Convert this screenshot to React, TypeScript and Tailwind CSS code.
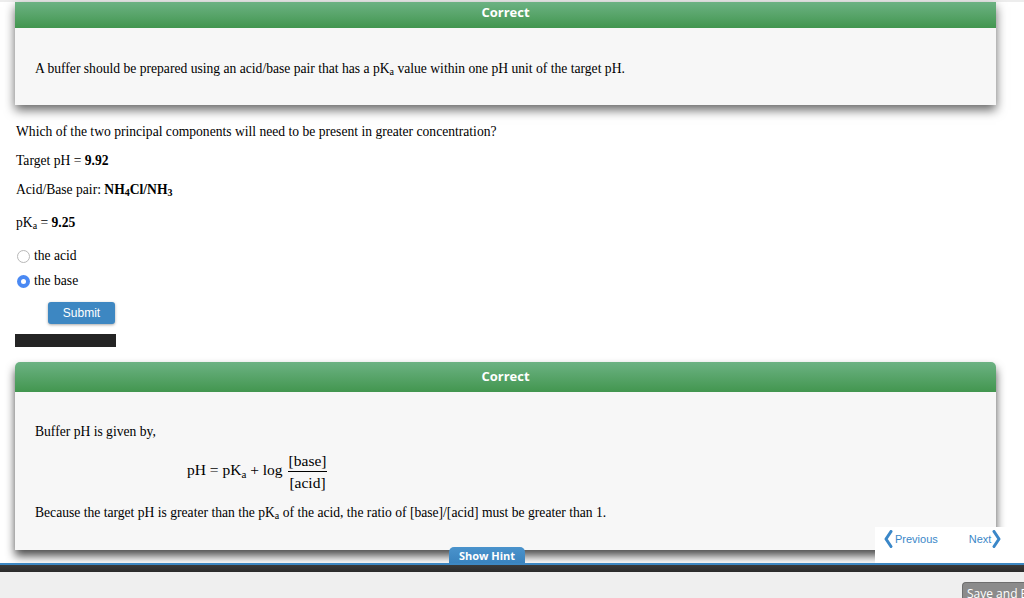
import React from "react";

function Chevron({ dir }: { dir: "left" | "right" }) {
  return (
    <svg width="9" height="18" viewBox="0 0 9 18" className="shrink-0">
      {dir === "left" ? (
        <polyline points="7,1.5 2,9 7,16.5" fill="none" stroke="#3a87c8" strokeWidth="3" strokeLinejoin="round" strokeLinecap="round" />
      ) : (
        <polyline points="2,1.5 7,9 2,16.5" fill="none" stroke="#3a87c8" strokeWidth="3" strokeLinejoin="round" strokeLinecap="round" />
      )}
    </svg>
  );
}

function Sub({ children }: { children: React.ReactNode }) {
  return <sub className="text-[10px] relative top-[2px]">{children}</sub>;
}

export default function App() {
  return (
    <div className="relative w-[1024px] h-[598px] overflow-hidden bg-white flex flex-col font-['Liberation_Serif',serif] text-black">
      <div className="h-[2px] bg-[#ededed] shrink-0" />

      {/* Card 1 */}
      <div className="ml-[15px] w-[981px] bg-[#f7f7f7] shadow-[0_5px_10px_rgba(0,0,0,0.6)] shrink-0">
        <div className="h-[26px] pb-[4px] bg-linear-to-b from-[#6cb283] to-[#42964f] flex items-center justify-center text-white font-bold text-[13px] font-['Open_Sans',sans-serif]">
          Correct
        </div>
        <div className="h-[77px] pt-[5px] flex items-center pl-[20px] text-[13.6px]">
          <span>
            A buffer should be prepared using an acid/base pair that has a pK<Sub>a</Sub> value within one pH unit of the target pH.
          </span>
        </div>
      </div>

      {/* Question */}
      <div className="flex flex-col text-[13.6px] shrink-0 mt-[13px]">
        <div className="h-[29px] flex items-center pl-[16px]">
          Which of the two principal components will need to be present in greater concentration?
        </div>
        <div className="h-[29px] flex items-center pl-[16px]">
          <span>
            Target pH = <b>9.92</b>
          </span>
        </div>
        <div className="h-[29px] flex items-center pl-[16px]">
          <span>
            Acid/Base pair: <b>NH<Sub>4</Sub>Cl/NH<Sub>3</Sub></b>
          </span>
        </div>
        <div className="h-[37px] flex items-center pl-[16px]">
          <span>
            pK<Sub>a</Sub> = <b>9.25</b>
          </span>
        </div>
        <div className="h-[29px] flex items-center pl-[17px] gap-[4px]">
          <span className="w-[13px] h-[13px] rounded-full border border-[#b8b8b8] bg-white" />
          <span>the acid</span>
        </div>
        <div className="h-[21px] flex items-center pl-[17px] gap-[4px]">
          <span className="w-[13px] h-[13px] rounded-full bg-[#4a89f3] flex items-center justify-center">
            <span className="w-[5px] h-[5px] rounded-full bg-white" />
          </span>
          <span>the base</span>
        </div>
        <div className="mt-[10px] ml-[48px] w-[67px] h-[22px] rounded-[3px] bg-[#3d87c2] shadow-[0_1px_3px_rgba(0,0,0,0.35)] flex items-center justify-center text-white text-[12px] font-['Liberation_Sans',sans-serif]">
          Submit
        </div>
        <div className="mt-[10px] ml-[15px] w-[101px] h-[13px] bg-[#242424]" />
      </div>

      {/* Card 2 */}
      <div className="mt-[15px] ml-[15px] w-[981px] h-[188px] bg-[#f7f7f7] rounded-t-[5px] shadow-[0_6px_10px_rgba(0,0,0,0.7)] shrink-0 flex flex-col">
        <div className="h-[30px] rounded-t-[5px] bg-linear-to-b from-[#6cb283] to-[#42964f] flex items-center justify-center text-white font-bold text-[13px] font-['Open_Sans',sans-serif]">
          Correct
        </div>
        <div className="pl-[20px] pt-[32px] text-[13.6px] flex flex-col">
          <div className="h-[16px] leading-[16px]">Buffer pH is given by,</div>
          <div className="mt-[11px] ml-[152px] h-[40px] flex items-center text-[15.5px]">
            <span className="mr-[5px] -mt-[3px]">
              pH = pK<sub className="text-[11px] relative top-[3px]">a</sub> + log
            </span>
            <span className="inline-flex flex-col items-center leading-[17px]">
              <span className="px-[1px]">[base]</span>
              <span className="w-full h-[1px] bg-black my-[2px]" />
              <span className="px-[1px]">[acid]</span>
            </span>
          </div>
          <div className="mt-[14px] h-[16px] leading-[16px]">
            Because the target pH is greater than the pK<Sub>a</Sub> of the acid, the ratio of [base]/[acid] must be greater than 1.
          </div>
        </div>
      </div>

      {/* Bottom bar */}
      <div className="mt-[13px] h-[2px] bg-[#3d87c2] shrink-0" />
      <div className="h-[7px] bg-linear-to-b from-[#3a3a3a] to-[#2b2b2b] shrink-0" />
      <div className="flex-1 bg-[#efefef]" />

      {/* Previous / Next overlay */}
      <div className="absolute left-[875px] top-[527px] w-[149px] h-[36px] bg-white flex items-start pt-[3px] font-['Liberation_Sans',sans-serif] text-[11px] text-[#3a87c8]">
        <div className="ml-[9px] flex items-center gap-[2px]">
          <Chevron dir="left" />
          <span>Previous</span>
        </div>
        <div className="ml-[31px] flex items-center gap-[1px]">
          <span>Next</span>
          <Chevron dir="right" />
        </div>
      </div>

      {/* Show Hint tab */}
      <div className="absolute left-[449px] top-[547px] w-[76px] h-[16px] pt-[2px] rounded-t-[5px] bg-linear-to-b from-[#4a93cc] to-[#3a83be] flex items-center justify-center text-white text-[11px] font-bold font-['Open_Sans',sans-serif]">
        Show Hint
      </div>

      {/* Save and Exit */}
      <div className="absolute left-[962px] top-[582px] w-[62px] h-[22px] overflow-hidden rounded-tl-[4px] bg-[#8b8b8b] border border-[#6e6e6e] border-r-0 text-white text-[12px] font-['Open_Sans',sans-serif] pl-[4px] pt-[2px] whitespace-nowrap">
        Save and E
      </div>
    </div>
  );
}
